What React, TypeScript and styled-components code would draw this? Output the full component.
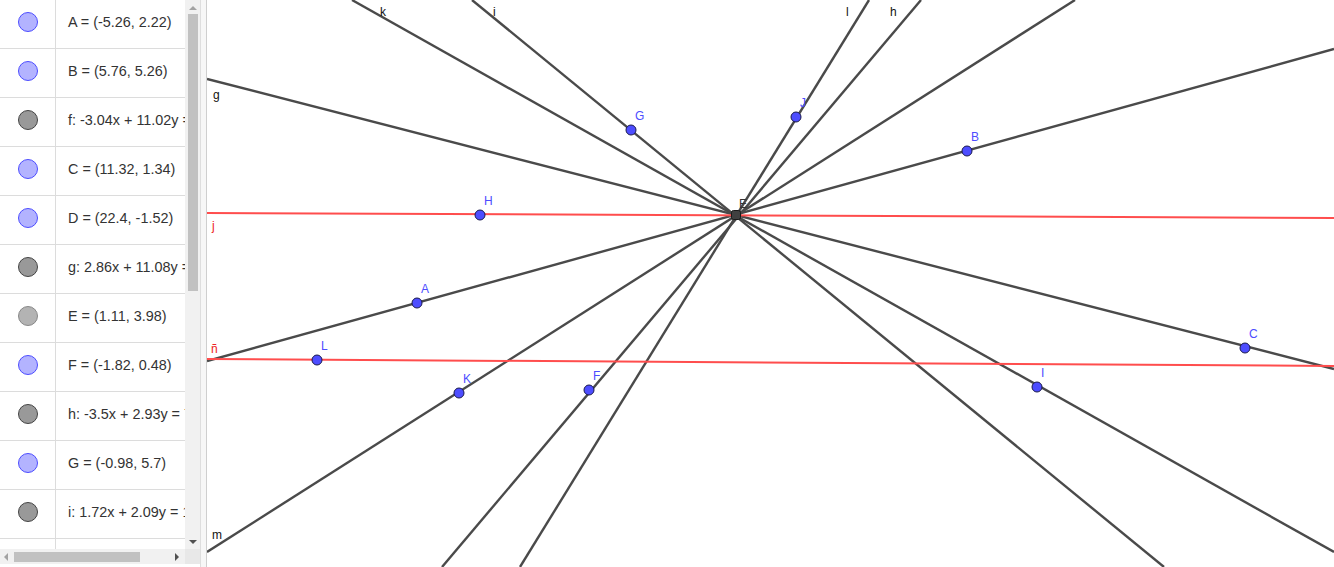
import React from 'react';
import styled, { createGlobalStyle } from 'styled-components';

const ROW_HEIGHT = 49;
const PANEL_WIDTH = 200;
const SCROLL = 15;
const LIST_HEIGHT = 549;
const LABEL_FONT = "'Liberation Sans', Arial, sans-serif";

const GlobalStyle = createGlobalStyle`
    html, body {
        margin: 0;
        padding: 0;
        background: #ffffff;
        overflow: hidden;
    }
    body {
        font-family: "Liberation Sans", Arial, sans-serif;
    }
`;

type Kind = 'point' | 'line' | 'fixed';

type Item = {
    kind: Kind;
    text: string;
};

const items: Item[] = [
    { kind: 'point', text: 'A = (-5.26, 2.22)' },
    { kind: 'point', text: 'B = (5.76, 5.26)' },
    { kind: 'line', text: 'f: -3.04x + 11.02y = 49.03' },
    { kind: 'point', text: 'C = (11.32, 1.34)' },
    { kind: 'point', text: 'D = (22.4, -1.52)' },
    { kind: 'line', text: 'g: 2.86x + 11.08y = 47.26' },
    { kind: 'fixed', text: 'E = (1.11, 3.98)' },
    { kind: 'point', text: 'F = (-1.82, 0.48)' },
    { kind: 'line', text: 'h: -3.5x + 2.93y = 7.77' },
    { kind: 'point', text: 'G = (-0.98, 5.7)' },
    { kind: 'line', text: 'i: 1.72x + 2.09y = 10.23' },
    { kind: 'line', text: '' },
];

type Seg = { x1: number; y1: number; x2: number; y2: number; red?: boolean };

const lines: Seg[] = [
    { x1: 352, y1: 0, x2: 1334, y2: 552 }, // k
    { x1: 472, y1: 0, x2: 1164, y2: 567 }, // i
    { x1: 207, y1: 79, x2: 1334, y2: 369 }, // g
    { x1: 207, y1: 361, x2: 1334, y2: 49 }, // f
    { x1: 869, y1: 0, x2: 520, y2: 567 }, // l
    { x1: 921, y1: 0, x2: 442, y2: 567 }, // h
    { x1: 1075, y1: 0, x2: 207, y2: 552 }, // m
    { x1: 207, y1: 213, x2: 1334, y2: 218, red: true }, // j
    { x1: 207, y1: 359, x2: 1334, y2: 366, red: true }, // n
];

type LineLabel = { x: number; y: number; text: string; red?: boolean };

const lineLabels: LineLabel[] = [
    { x: 380, y: 16, text: 'k' },
    { x: 493, y: 16, text: 'i' },
    { x: 846, y: 16, text: 'l' },
    { x: 890, y: 16, text: 'h' },
    { x: 213, y: 99, text: 'g' },
    { x: 212, y: 230, text: 'j', red: true },
    { x: 211, y: 353, text: 'ñ', red: true },
    { x: 212, y: 539, text: 'm' },
];

type Pt = { x: number; y: number; name: string };

const points: Pt[] = [
    { x: 417, y: 303, name: 'A' },
    { x: 967, y: 151, name: 'B' },
    { x: 1245, y: 348, name: 'C' },
    { x: 589, y: 390, name: 'F' },
    { x: 631, y: 130, name: 'G' },
    { x: 480, y: 215, name: 'H' },
    { x: 1037, y: 387, name: 'I' },
    { x: 796, y: 117, name: 'J' },
    { x: 459, y: 393, name: 'K' },
    { x: 317, y: 360, name: 'L' },
];

export default function App() {
    return (
        <>
            <GlobalStyle />
            <Page>
                <Panel>
                    <ListArea>
                        <List>
                            {items.map((item, i) => (
                                <Row key={i}>
                                    <MarkerCell>
                                        <Marker kind={item.kind} />
                                    </MarkerCell>
                                    <TextCell>{item.text}</TextCell>
                                </Row>
                            ))}
                        </List>
                        <VScroll>
                            <ArrowUp />
                            <VThumb />
                            <ArrowDown />
                        </VScroll>
                    </ListArea>
                    <HScrollRow>
                        <HScroll>
                            <ArrowLeft />
                            <HThumb />
                            <ArrowRight />
                        </HScroll>
                        <Corner />
                    </HScrollRow>
                </Panel>
                <Divider />
                <Canvas>
                    <svg width="100%" height="100%" viewBox="207 0 1127 567" preserveAspectRatio="xMinYMin slice">
                        {lines.map((l, i) => (
                            <line
                                key={i}
                                x1={l.x1}
                                y1={l.y1}
                                x2={l.x2}
                                y2={l.y2}
                                stroke={l.red ? '#ff4d4d' : '#4a4a4a'}
                                strokeWidth={l.red ? 2 : 2.4}
                            />
                        ))}
                        {lineLabels.map((t, i) => (
                            <text
                                key={i}
                                x={t.x}
                                y={t.y}
                                fontSize="12"
                                fontFamily={LABEL_FONT}
                                fill={t.red ? '#ee2222' : '#111111'}
                            >
                                {t.text}
                            </text>
                        ))}
                        {points.map((p) => (
                            <g key={p.name}>
                                <circle cx={p.x} cy={p.y} r={5} fill="#4d4dff" stroke="#1a1a4d" strokeWidth={1} />
                                <text x={p.x + 4} y={p.y - 10} fontSize="12" fontFamily={LABEL_FONT} fill="#4d4dff">
                                    {p.name}
                                </text>
                            </g>
                        ))}
                        <rect x={731.5} y={210.5} width={9} height={9} rx={2} fill="#404040" stroke="#1a1a1a" strokeWidth={1} />
                        <text x={739} y={208} fontSize="12" fontFamily={LABEL_FONT} fill="#333333">
                            E
                        </text>
                    </svg>
                </Canvas>
            </Page>
        </>
    );
}

const Page = styled.div`
    display: flex;
    width: 100vw;
    height: 100vh;
    background: #ffffff;
`;

const Panel = styled.div`
    width: ${PANEL_WIDTH}px;
    flex: none;
    display: flex;
    flex-direction: column;
    background: #ffffff;
`;

const ListArea = styled.div`
    height: ${LIST_HEIGHT}px;
    display: flex;
    overflow: hidden;
`;

const List = styled.div`
    flex: 1;
    overflow: hidden;
`;

const Row = styled.div`
    display: flex;
    height: ${ROW_HEIGHT - 1}px;
    border-bottom: 1px solid #dcdcdc;
`;

const MarkerCell = styled.div`
    width: 56px;
    flex: none;
    display: flex;
    align-items: center;
    justify-content: center;
    border-right: 1px solid #dcdcdc;
    padding-bottom: 4px;
    box-sizing: border-box;
`;

const markerFill: Record<Kind, string> = {
    point: '#b3b3ff',
    line: '#999999',
    fixed: '#b3b3b3',
};

const markerStroke: Record<Kind, string> = {
    point: '#4d4dff',
    line: '#444444',
    fixed: '#888888',
};

const Marker = styled.span<{ kind: Kind }>`
    width: 18px;
    height: 18px;
    border-radius: 50%;
    background: ${(p) => markerFill[p.kind]};
    border: 1px solid ${(p) => markerStroke[p.kind]};
`;

const TextCell = styled.div`
    flex: 1;
    display: flex;
    align-items: center;
    padding-left: 12px;
    padding-bottom: 4px;
    white-space: nowrap;
    overflow: hidden;
    font-size: 14.4px;
    color: #333333;
`;

const VScroll = styled.div`
    width: ${SCROLL}px;
    flex: none;
    background: #f1f1f1;
    display: flex;
    flex-direction: column;
    align-items: center;
`;

const VThumb = styled.div`
    width: 10px;
    height: 277px;
    margin-top: 4px;
    background: #c1c1c1;
`;

const Arrow = styled.span`
    width: 0;
    height: 0;
    flex: none;
`;

const ArrowUp = styled(Arrow)`
    margin-top: 6px;
    border-left: 4px solid transparent;
    border-right: 4px solid transparent;
    border-bottom: 4px solid #a3a3a3;
`;

const ArrowDown = styled(Arrow)`
    margin-top: auto;
    margin-bottom: 5px;
    border-left: 4px solid transparent;
    border-right: 4px solid transparent;
    border-top: 4px solid #505050;
`;

const HScrollRow = styled.div`
    display: flex;
    height: ${SCROLL}px;
`;

const HScroll = styled.div`
    flex: 1;
    background: #f1f1f1;
    display: flex;
    align-items: center;
    padding: 0 4px;
`;

const HThumb = styled.div`
    width: 126px;
    height: 10px;
    margin-left: 6px;
    background: #c1c1c1;
`;

const ArrowLeft = styled(Arrow)`
    border-top: 4px solid transparent;
    border-bottom: 4px solid transparent;
    border-right: 4px solid #a3a3a3;
`;

const ArrowRight = styled(Arrow)`
    margin-left: auto;
    margin-right: 2px;
    border-top: 4px solid transparent;
    border-bottom: 4px solid transparent;
    border-left: 4px solid #505050;
`;

const Corner = styled.div`
    width: ${SCROLL}px;
    background: #e8e8e8;
`;

const Divider = styled.div`
    width: 5px;
    flex: none;
    background: #f7f7f7;
    border-left: 1px solid #dedede;
    border-right: 1px solid #cfcfcf;
`;

const Canvas = styled.div`
    flex: 1;
    height: 100%;
    overflow: hidden;
    background: #ffffff;

    svg {
        display: block;
    }
`;
